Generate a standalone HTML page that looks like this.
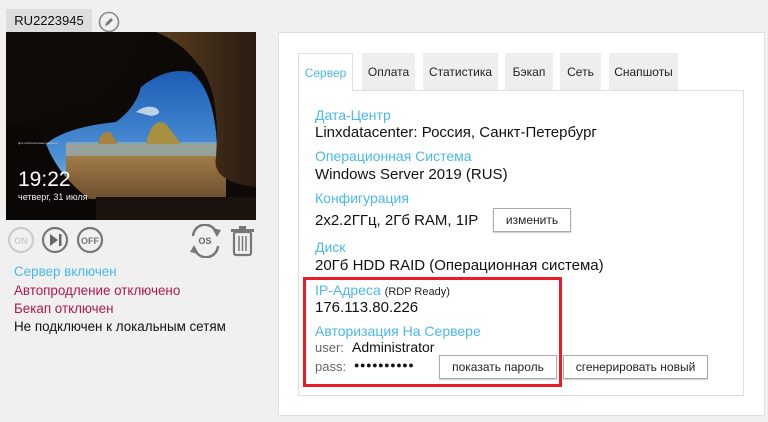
<!DOCTYPE html>
<html><head><meta charset="utf-8"><style>
*{margin:0;padding:0;box-sizing:border-box}
body{width:768px;height:422px;background:#f0f0f0;font-family:"Liberation Sans",sans-serif;position:relative;overflow:hidden;color:#111}
.a{position:absolute;white-space:nowrap}
.lbl{color:#4ab8e8;font-size:14px}
.val{font-size:15px;color:#111}
.btn{position:absolute;border:1px solid #aaa;background:#fff;font-size:12px;text-align:center;color:#222;box-shadow:0 1px 1px #ccc}
.tab{position:absolute;top:53px;height:37px;background:#eee;font-size:12px;color:#222;text-align:center;line-height:38px}
.st{position:absolute;left:14px;font-size:13.4px}
</style></head><body>
<div class="a" style="left:6px;top:9px;width:86px;height:23px;background:#ddd;font-size:13px;line-height:24px;text-align:center">RU2223945</div>
<svg class="a" style="left:98px;top:11px" width="22" height="22"><circle cx="11" cy="11" r="9.5" fill="none" stroke="#888" stroke-width="1.6"/><path d="M7 15 L8 12 L13 7 L15 9 L10 14 Z" fill="#777"/></svg>
<svg class="a" style="left:6px;top:32px" width="250" height="188" viewBox="0 0 250 188">
<defs><linearGradient id="sky" x1="0" y1="0" x2="0" y2="1"><stop offset="0" stop-color="#1c5db5"/><stop offset=".7" stop-color="#4f93d6"/><stop offset="1" stop-color="#9cc6e6"/></linearGradient>
<linearGradient id="sand" x1="0" y1="0" x2="0" y2="1"><stop offset="0" stop-color="#b08850"/><stop offset="1" stop-color="#6e4e2c"/></linearGradient>
<linearGradient id="rock" x1="0" y1="0" x2="1" y2="0"><stop offset="0" stop-color="#5a3e20"/><stop offset="1" stop-color="#2a1c10"/></linearGradient></defs>
<rect width="250" height="188" fill="#0c0907"/>
<path d="M40 112 Q60 95 110 90 Q130 75 135 55 Q160 35 185 40 Q205 55 210 100 L215 165 L40 165Z" fill="url(#sky)"/>
<path d="M130 80 q10 -8 20 -4 q8 6 -5 8z" fill="#dfeaf5" opacity=".8"/>
<rect x="60" y="112" width="160" height="55" fill="url(#sand)"/>
<rect x="60" y="110" width="160" height="14" fill="#8fb0bc" opacity=".7"/>
<path d="M92 112 Q95 98 104 100 L112 112Z" fill="#a88040"/>
<path d="M140 112 Q146 84 160 92 L175 112Z" fill="#a89040"/>
<path d="M190 30 Q215 55 210 125 Q205 150 250 155 L250 0 L150 0 Q175 10 190 30Z" fill="url(#rock)"/>
<path d="M0 0 L250 0 L150 0 Q120 15 120 40 Q110 60 80 70 Q40 80 20 90 L0 100Z" fill="#100b08"/>
<path d="M0 95 Q30 90 40 112 Q55 150 95 175 L100 188 L0 188Z" fill="#0a0705"/>
<rect x="90" y="165" width="160" height="23" fill="#1a120c"/>
<text x="12" y="154" fill="#fff" font-size="21" font-family="Liberation Sans">19:22</text>
<text x="12" y="168" fill="#eee" font-size="9" font-family="Liberation Sans">четверг, 31 июля</text>
<text x="12" y="112" fill="#ccc" font-size="3" font-family="Liberation Sans">Для разблокировки нажмите</text>
</svg>
<svg class="a" style="left:6px;top:226px" width="100" height="30"><g fill="none" stroke-width="2.2"><circle cx="15" cy="14" r="12" stroke="#ccc"/><circle cx="49" cy="14" r="12" stroke="#777"/><circle cx="84" cy="14" r="12" stroke="#777"/></g>
<text x="15" y="18" fill="#ccc" font-size="9" font-weight="bold" text-anchor="middle" font-family="Liberation Sans">ON</text>
<path d="M44 8 L52 14 L44 20Z M53 8 h2.5 v12 h-2.5Z" fill="#666"/>
<text x="84" y="18" fill="#777" font-size="9" font-weight="bold" text-anchor="middle" font-family="Liberation Sans">OFF</text></svg>
<svg class="a" style="left:188px;top:224px" width="70" height="34"><g fill="none" stroke="#777" stroke-width="2.5"><path d="M5 12 A12 12 0 0 1 28 8"/><path d="M30 22 A12 12 0 0 1 7 26"/></g><path d="M24 4 L33 6 L29 13Z M11 30 L2 28 L6 21Z" fill="#777"/><text x="17" y="20" fill="#666" font-size="9" font-weight="bold" text-anchor="middle" font-family="Liberation Sans">OS</text>
<rect x="46" y="8" width="17" height="23" rx="2" fill="none" stroke="#777" stroke-width="2.2"/><rect x="43" y="5" width="23" height="3" fill="#777"/><rect x="51" y="2" width="7" height="3" fill="#777"/><path d="M51 12v15M54.5 12v15M58 12v15" stroke="#777" stroke-width="1.5"/></svg>
<div class="st" style="top:264px;color:#4ab8e8">Сервер включен</div>
<div class="st" style="top:283px;color:#b0184a">Автопродление отключено</div>
<div class="st" style="top:301px;color:#b0184a">Бекап отключен</div>
<div class="st" style="top:319px;color:#111">Не подключен к локальным сетям</div>

<div class="a" style="left:278px;top:32px;width:487px;height:384px;background:#fff;border:1px solid #e0e0e0;border-top:1px solid #ddd"></div>
<div class="a" style="left:298px;top:90px;width:446px;height:306px;background:#fff;border:1px solid #ddd"></div>
<div class="tab" style="left:298px;width:55px;background:#fff;border:1px solid #ddd;border-bottom:none;height:38px;color:#4ab8e8">Сервер</div>
<div class="tab" style="left:362px;width:53px">Оплата</div>
<div class="tab" style="left:423px;width:75px">Статистика</div>
<div class="tab" style="left:505px;width:48px">Бэкап</div>
<div class="tab" style="left:560px;width:41px">Сеть</div>
<div class="tab" style="left:609px;width:69px">Снапшоты</div>

<div class="a lbl" style="left:315px;top:107px">Дата-Центр</div>
<div class="a val" style="left:315px;top:124px">Linxdatacenter: Россия, Санкт-Петербург</div>
<div class="a lbl" style="left:315px;top:148px">Операционная Система</div>
<div class="a val" style="left:315px;top:166px">Windows Server 2019 (RUS)</div>
<div class="a lbl" style="left:315px;top:190px">Конфигурация</div>
<div class="a val" style="left:315px;top:212px">2x2.2ГГц, 2Гб RAM, 1IP</div>
<div class="btn" style="left:493px;top:208px;width:78px;height:24px;line-height:22px">изменить</div>
<div class="a lbl" style="left:315px;top:239px">Диск</div>
<div class="a val" style="left:315px;top:257px">20Гб HDD RAID (Операционная система)</div>
<div class="a" style="left:303px;top:277px;width:259px;height:110px;border:3px solid #ea1c2a"></div>
<div class="a lbl" style="left:315px;top:282px">IP-Адреса <span style="color:#222;font-size:11px">(RDP Ready)</span></div>
<div class="a val" style="left:315px;top:299px">176.113.80.226</div>
<div class="a lbl" style="left:315px;top:323px">Авторизация На Сервере</div>
<div class="a" style="left:315px;top:340px;font-size:13px;color:#666">user:</div>
<div class="a" style="left:352px;top:339px;font-size:14px">Administrator</div>
<div class="a" style="left:315px;top:359px;font-size:13px;color:#666">pass:</div>
<div class="a" style="left:354px;top:360px;font-size:9px;letter-spacing:0.6px">●●●●●●●●●●</div>
<div class="btn" style="left:439px;top:355px;width:118px;height:24px;line-height:22px">показать пароль</div>
<div class="btn" style="left:563px;top:355px;width:145px;height:24px;line-height:22px">сгенерировать новый</div>
</body></html>
